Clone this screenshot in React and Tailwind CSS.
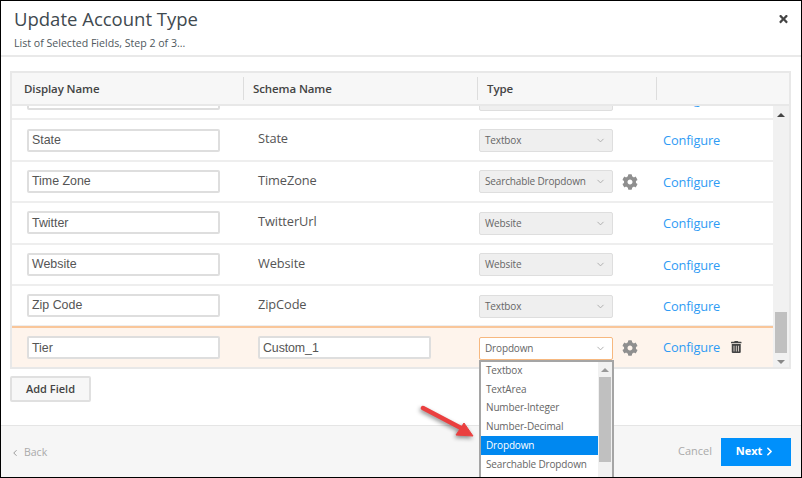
import { ChevronDown, ChevronLeft, ChevronRight } from "lucide-react";
import { FaCog, FaTimes, FaTrashAlt } from "react-icons/fa";

const rows = [
  { display: "State", schema: "State", type: "Textbox" },
  { display: "Time Zone", schema: "TimeZone", type: "Searchable Dropdown", gear: true },
  { display: "Twitter", schema: "TwitterUrl", type: "Website" },
  { display: "Website", schema: "Website", type: "Website" },
  { display: "Zip Code", schema: "ZipCode", type: "Textbox" },
];

const options = ["Textbox", "TextArea", "Number-Integer", "Number-Decimal", "Dropdown", "Searchable Dropdown"];

const TextBox = ({ value, className = "" }) => (
  <div className={`h-[23px] bg-white border-2 border-[#dedede] rounded-[2px] pl-[3px] flex items-center text-[12.4px] text-[#555] font-['Liberation_Sans',sans-serif] ${className}`}>
    {value}
  </div>
);

const TypeSelect = ({ value, active }) => (
  <div
    className={`w-[134px] h-[23px] mt-[1px] rounded-[2px] pl-[5px] pr-[6px] flex items-center justify-between text-[10px] tracking-[-0.15px] text-[#666] border ${
      active ? "bg-white border-[#f7b87f]" : "bg-[#efefef] border-[#dedede]"
    }`}
  >
    <span>{value}</span>
    <ChevronDown className="w-[11px] h-[11px] text-[#aaa]" />
  </div>
);

const Row = ({ display, children, schema, type, gear, active, trash, className = "" }) => (
  <div className={`shrink-0 flex items-center ${active ? "bg-[#fef4ec] border-y-2 border-[#f9c69a] h-[43px] -mt-[1px]" : "h-[41.4px] border-b-2 border-[#eeeeee]"} ${className}`}>
    <div className="w-[231px] pl-[15px] shrink-0">
      <TextBox value={display} className="w-[193px]" />
    </div>
    <div className="w-[236px] pl-[15px] shrink-0 text-[12.8px] tracking-[-0.1px] text-[#555] -mt-[2px]">{children || schema}</div>
    <TypeSelect value={type} active={active} />
    <div className={`w-[50px] shrink-0 pl-[9px] ${active ? "" : "mt-[1px]"}`}>{gear && <FaCog className="w-[16px] h-[16px] text-[#8f8f8f]" />}</div>
    <a className={`text-[12.8px] tracking-[-0.15px] text-[#2f9bf4] ${active ? "" : "mt-[2px]"}`}>Configure</a>
    {trash && <FaTrashAlt className="ml-[11px] w-[10.5px] h-[12px] text-[#444] -mt-[2px]" />}
  </div>
);

export default function App() {
  return (
    <div className="relative w-[802px] h-[478px] overflow-hidden bg-white border border-black flex flex-col font-['Open_Sans',sans-serif]">
      <div className="h-[56px] shrink-0 border-b-2 border-[#e9e9e9] pl-[13px] pr-[12px] pt-[4px] flex justify-between">
        <div>
          <h1 className="text-[18.5px] leading-[28px] text-[#3f4a50]">Update Account Type</h1>
          <p className="text-[10.6px] leading-[16px] mt-[2px] text-[#4f585d]">List of Selected Fields, Step 2 of 3...</p>
        </div>
        <FaTimes className="w-[11px] h-[12px] text-[#444] mt-[8px]" />
      </div>

      <div className="flex-1 pl-[9px] pr-[10px] pt-[14px]">
        <div className="h-[298px] border-2 border-[#e8e8e8] flex flex-col overflow-hidden">
          <div className="h-[33px] shrink-0 bg-[#f7f7f7] border-b-2 border-[#e8e8e8] flex items-center text-[11.5px] tracking-[-0.1px] font-semibold text-[#444] relative z-10">
            <div className="w-[232px] pl-[12px] h-[23px] flex items-center border-r border-[#dddddd]">Display Name</div>
            <div className="w-[234px] pl-[9px] h-[23px] flex items-center border-r border-[#dddddd]">Schema Name</div>
            <div className="w-[179px] pl-[9px] h-[23px] flex items-center border-r border-[#dddddd]">Type</div>
          </div>
          <div className="flex-1 flex min-h-0">
            <div className="flex-1 flex flex-col overflow-hidden">
              {/* row scrolled out under the header */}
              <Row display="" schema="" type="" className="-mt-[27px]" />
              {rows.map((r) => (
                <Row key={r.display} {...r} />
              ))}
              <Row display="Tier" type="Dropdown" gear active trash>
                <TextBox value="Custom_1" className="w-[173px] mt-[2px]" />
              </Row>
            </div>
            <div className="w-[16px] shrink-0 bg-[#f1f1f1] flex flex-col items-center pt-[7px]">
              <div className="w-0 h-0 border-x-[4px] border-x-transparent border-b-[4px] border-b-[#444]" />
              <div className="w-[12px] h-[41px] bg-[#c0c0c0] mt-[195px]" />
              <div className="w-0 h-0 border-x-[4px] border-x-transparent border-t-[4px] border-t-[#888] mt-[7px]" />
            </div>
          </div>
        </div>
        <button className="mt-[7px] w-[81px] h-[26px] bg-[#f7f7f7] border-2 border-[#e0e0e0] rounded-[2px] text-[11px] font-semibold text-[#444]">
          Add Field
        </button>
      </div>

      <div className="h-[52px] shrink-0 bg-[#f6f6f6] border-t border-[#e5e5e5] flex items-center justify-between pl-[9px] pr-[10px]">
        <div className="flex items-center gap-[4px] text-[10.5px] text-[#aaa] mt-[2px]">
          <ChevronLeft className="w-[10px] h-[10px] text-[#888]" />
          Back
        </div>
        <div className="flex items-center gap-[9px]">
          <span className="text-[11px] text-[#aaa]">Cancel</span>
          <button className="w-[70px] h-[28px] bg-[#0090fb] text-white text-[11px] font-bold flex items-center justify-center gap-[1px]">
            Next
            <ChevronRight className="w-[13px] h-[13px]" strokeWidth={3} />
          </button>
        </div>
      </div>

      {/* open dropdown list */}
      <div className="absolute left-[478px] top-[359px] w-[135px] h-[130px] bg-white border-2 border-[#a5a5a5] border-b-0 flex">
        <div className="w-[117px] -mt-[1px]">
          {options.map((o) => (
            <div
              key={o}
              className={`h-[18.8px] pl-[5px] flex items-center text-[10px] tracking-[-0.15px] ${o === "Dropdown" ? "bg-[#0088f0] text-white" : "text-[#666]"}`}
            >
              {o}
            </div>
          ))}
        </div>
        <div className="flex-1 bg-[#f1f1f1] flex flex-col items-center pt-[6px]">
          <div className="w-0 h-0 border-x-[4px] border-x-transparent border-b-[4px] border-b-[#999]" />
          <div className="w-[12px] h-[85px] bg-[#c0c0c0] mt-[5px]" />
        </div>
      </div>

      {/* annotation arrow */}
      <svg className="absolute left-[414px] top-[399px] drop-shadow-[-1px_2px_2px_rgba(0,0,0,0.45)]" width="62" height="44" viewBox="0 0 62 44">
        <path d="M8 8 L46 28" stroke="#ea3f3f" strokeWidth="4.5" strokeLinecap="round" fill="none" />
        <path d="M49 23 L58 36 L41 35 Z" fill="#ea3f3f" stroke="#ea3f3f" strokeWidth="1" strokeLinejoin="round" />
      </svg>
    </div>
  );
}
